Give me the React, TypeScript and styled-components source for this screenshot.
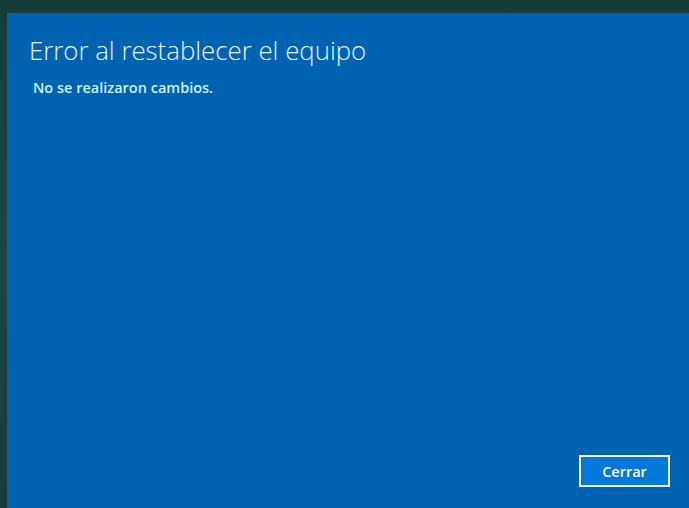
import React from 'react'
import styled, { createGlobalStyle } from 'styled-components'

const COLORS = {
  desktop: '#15403d',
  panel: '#0063b1',
  button: '#0078d7',
  subtitle: '#ccf3ff',
};

const GlobalStyle = createGlobalStyle`
  html, body {
    margin: 0;
    padding: 0;
    background: ${COLORS.desktop};
    font-family: "Open Sans", "Noto Sans", sans-serif;
  }
`;

const Desktop = styled.div`
  width: 689px;
  height: 508px;
  padding: 13px 0 0 7px;
  box-sizing: border-box;
  background: linear-gradient(180deg, #143d3a 0%, #1a4744 50%, #173b3b 100%);
  display: flex;
`;

const Panel = styled.div`
  flex: 1;
  background: ${COLORS.panel};
  display: flex;
  flex-direction: column;
  padding: 20px 19px 21px 22px;
`;

const Title = styled.h1`
  margin: 0;
  font-size: 25.8px;
  font-weight: 300;
  color: #eef4fa;
  line-height: 34px;
`;

const Subtitle = styled.p`
  margin: 11px 0 0 4px;
  font-size: 14.5px;
  font-weight: 600;
  color: ${COLORS.subtitle};
`;

const Footer = styled.div`
  margin-top: auto;
  display: flex;
  justify-content: flex-end;
`;

const Button = styled.button`
  width: 91px;
  height: 32px;
  box-sizing: border-box;
  border: 2px solid #fff;
  background: ${COLORS.button};
  color: #fff;
  font-family: inherit;
  font-size: 14.5px;
  font-weight: 600;
  cursor: pointer;
`;

function App() {
  return (
    <>
      <GlobalStyle />
      <Desktop>
        <Panel>
          <Title>Error al restablecer el equipo</Title>
          <Subtitle>No se realizaron cambios.</Subtitle>
          <Footer>
            <Button>Cerrar</Button>
          </Footer>
        </Panel>
      </Desktop>
    </>
  )
}

export default App
